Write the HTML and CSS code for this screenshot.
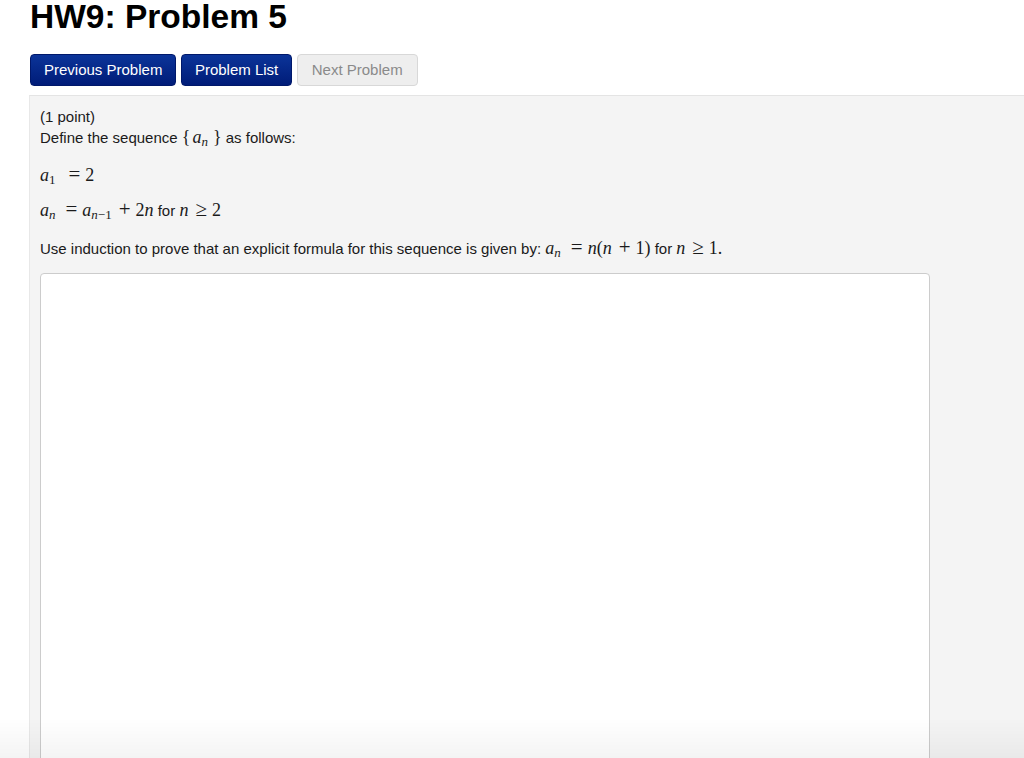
FILE: index.html
```html
<!DOCTYPE html>
<html>
<head>
<meta charset="utf-8">
<title>HW9: Problem 5</title>
<link rel="stylesheet" href="styles.css">
</head>
<body>
<div class="page">
  <h1 class="title">HW9: Problem 5</h1>
  <nav class="nav">
    <a class="btn btn-primary">Previous Problem</a>
    <a class="btn btn-primary">Problem List</a>
    <a class="btn btn-disabled">Next Problem</a>
  </nav>
  <section class="panel">
    <p class="intro">(1 point)<br>Define the sequence <span class="m"><span class="brace">{</span><i>a</i><sub><i>n</i></sub><span class="brace sp">}</span></span> as follows:</p>
    <p class="eq eq1"><span class="m"><i>a</i><sub>1</sub><span class="op op-wide">=</span>2</span></p>
    <p class="eq eq2"><span class="m"><i>a</i><sub><i>n</i></sub><span class="op op-wide">=</span><i>a</i><sub><i>n</i>−1</sub><span class="op">+</span>2<i>n</i></span> for <span class="m"><i>n</i><span class="op">≥</span>2</span></p>
    <p class="task">Use induction to prove that an explicit formula for this sequence is given by: <span class="m"><i>a</i><sub><i>n</i></sub><span class="op op-wide">=</span><i>n</i>(<i>n</i><span class="op">+</span>1)</span> for <span class="m"><i>n</i><span class="op">≥</span>1.</span></p>
    <div class="answer"></div>
  </section>
</div>
<div class="fade"></div>
</body>
</html>
```
FILE: styles.css
```css
html, body {
  margin: 0;
  padding: 0;
  background: #ffffff;
  overflow: hidden;
}
body {
  font-family: "Liberation Sans", Arial, Helvetica, sans-serif;
  color: #1a1a1a;
  height: 758px;
}
.page {
  padding-left: 29px;
}
.title {
  margin: 0 0 21px 1px;
  font-size: 33.5px;
  line-height: 33px;
  font-weight: bold;
  color: #000;
}
.nav {
  display: flex;
  gap: 5px;
  margin-left: 1px;
}
.btn {
  display: inline-block;
  box-sizing: border-box;
  height: 32px;
  line-height: 30px;
  padding: 0 12.5px 0 13px;
  font-size: 15px;
  border-radius: 4px;
  border: 1px solid transparent;
  text-decoration: none;
}
.btn-primary {
  background: linear-gradient(#0b3499, #001c78);
  border-color: #00186a;
  color: #ffffff;
}
.btn-disabled {
  background: #eeeeee;
  border-color: #d8d8d8;
  color: #8a8a8a;
  padding: 0 14px;
}
.panel {
  margin-top: 9px;
  background: #f4f4f4;
  border-top: 1px solid #e4e4e4;
  border-left: 1px solid #e8e8e8;
  padding: 10px 0 0 10px;
  height: 700px;
  font-size: 15px;
  line-height: 21px;
  color: #1a1a1a;
}
.panel p {
  margin: 0;
}
.m {
  font-family: "Liberation Serif", "Times New Roman", serif;
  font-size: 18px;
  white-space: nowrap;
}
.m i {
  font-style: italic;
}
.m sub {
  font-size: 13px;
  line-height: 0;
  vertical-align: -3px;
}
.brace {
  font-style: normal;
  margin-right: 2px;
}
.brace.sp {
  margin-left: 5px;
  margin-right: 0;
}
.op {
  font-size: 21px;
  line-height: 0;
  margin: 0 5px 0 7px;
}
.op-wide {
  margin-left: 10px;
}
.eq1 .op-wide {
  margin-left: 13px;
}
.eq1 {
  margin-top: 17px !important;
}
.eq2 {
  margin-top: 14px !important;
}
.task {
  margin-top: 17px !important;
}
.answer {
  margin-top: 14px;
  width: 888px;
  height: 600px;
  background: #ffffff;
  border: 1px solid #cccccc;
  border-radius: 4px;
}
.fade {
  position: fixed;
  left: 0;
  right: 0;
  bottom: 0;
  height: 40px;
  background: linear-gradient(rgba(0,0,0,0), rgba(0,0,0,0.045));
  pointer-events: none;
}
```
